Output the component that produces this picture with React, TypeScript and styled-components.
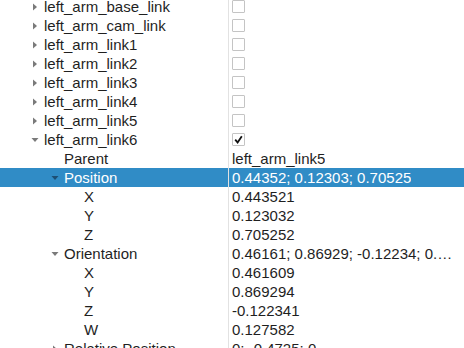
import React from "react";
import styled, { createGlobalStyle } from "styled-components";

const GlobalStyle = createGlobalStyle`
  html, body {
    margin: 0;
    padding: 0;
    background: #ffffff;
    overflow: hidden;
  }
  body {
    font-family: "Liberation Sans", "DejaVu Sans", sans-serif;
    font-size: 15px;
    color: #1f1f1f;
  }
`;

const Tree = styled.div`
  width: 464px;
  height: 348px;
  overflow: hidden;
  display: flex;
  flex-direction: column;
`;

const Rows = styled.div`
  margin-top: -3px;
  display: flex;
  flex-direction: column;
`;

const Row = styled.div<{ selected?: boolean }>`
  height: 19px;
  flex: none;
  display: flex;
  align-items: center;
  background: ${({ selected }) => (selected ? "#308cc6" : "transparent")};
  color: ${({ selected }) => (selected ? "#ffffff" : "#1f1f1f")};
`;

const NameCell = styled.div<{ depth: number }>`
  width: 229px;
  height: 100%;
  box-sizing: border-box;
  flex: none;
  display: flex;
  align-items: center;
  padding-left: ${({ depth }) => 26 + depth * 20}px;
  border-right: 1px solid #e2e2e2;
  white-space: nowrap;
`;

const Expander = styled.span`
  width: 18px;
  height: 19px;
  flex: none;
  display: flex;
  align-items: center;
  justify-content: center;
`;

const NameText = styled.span`
  line-height: 19px;
`;

const ValueCell = styled.div`
  flex: 1;
  min-width: 0;
  height: 100%;
  display: flex;
  align-items: center;
  padding-left: 3px;
  padding-right: 6px;
  white-space: nowrap;
  overflow: hidden;
`;

const ValueText = styled.span`
  overflow: hidden;
  text-overflow: ellipsis;
  line-height: 19px;
`;

const CheckBox = styled.span`
  width: 13px;
  height: 13px;
  box-sizing: border-box;
  border: 1px solid #c4c4c4;
  border-radius: 1px;
  background: #ffffff;
  display: flex;
  align-items: center;
  justify-content: center;
`;

type Arrow = "none" | "right" | "down";

type Item = {
  name: string;
  depth: number;
  arrow: Arrow;
  value?: string;
  check?: boolean;
  selected?: boolean;
};

const items: Item[] = [
  { name: "left_arm_base_link", depth: 0, arrow: "right", check: false },
  { name: "left_arm_cam_link", depth: 0, arrow: "right", check: false },
  { name: "left_arm_link1", depth: 0, arrow: "right", check: false },
  { name: "left_arm_link2", depth: 0, arrow: "right", check: false },
  { name: "left_arm_link3", depth: 0, arrow: "right", check: false },
  { name: "left_arm_link4", depth: 0, arrow: "right", check: false },
  { name: "left_arm_link5", depth: 0, arrow: "right", check: false },
  { name: "left_arm_link6", depth: 0, arrow: "down", check: true },
  { name: "Parent", depth: 1, arrow: "none", value: "left_arm_link5" },
  { name: "Position", depth: 1, arrow: "down", value: "0.44352; 0.12303; 0.70525", selected: true },
  { name: "X", depth: 2, arrow: "none", value: "0.443521" },
  { name: "Y", depth: 2, arrow: "none", value: "0.123032" },
  { name: "Z", depth: 2, arrow: "none", value: "0.705252" },
  { name: "Orientation", depth: 1, arrow: "down", value: "0.46161; 0.86929; -0.12234; 0.127582" },
  { name: "X", depth: 2, arrow: "none", value: "0.461609" },
  { name: "Y", depth: 2, arrow: "none", value: "0.869294" },
  { name: "Z", depth: 2, arrow: "none", value: "-0.122341" },
  { name: "W", depth: 2, arrow: "none", value: "0.127582" },
  { name: "Relative Position", depth: 1, arrow: "right", value: "0; -0.4725; 0" },
];

const ArrowIcon = ({ dir, light }: { dir: Arrow; light?: boolean }) => {
  if (dir === "none") return null;
  const fill = light ? "#1d4f74" : "#7a7a7a";
  return dir === "right" ? (
    <svg width="8" height="8" viewBox="0 0 8 8">
      <polygon points="2,0.5 6,4 2,7.5" fill={fill} />
    </svg>
  ) : (
    <svg width="8" height="8" viewBox="0 0 8 8">
      <polygon points="0.5,2 7.5,2 4,6" fill={fill} />
    </svg>
  );
};

const Check = () => (
  <svg width="9" height="9" viewBox="0 0 9 9">
    <path d="M1.2 4.6 L3.6 7.4 L7.8 1.2" stroke="#111" strokeWidth="1.8" fill="none" />
  </svg>
);

const App = (): JSX.Element => {
  return (
    <>
      <GlobalStyle />
      <Tree>
        <Rows>
          {items.map((it, i) => (
            <Row key={i} selected={it.selected}>
              <NameCell depth={it.depth}>
                <Expander>
                  <ArrowIcon dir={it.arrow} light={it.selected} />
                </Expander>
                <NameText>{it.name}</NameText>
              </NameCell>
              <ValueCell>
                {it.check !== undefined ? (
                  <CheckBox>{it.check && <Check />}</CheckBox>
                ) : (
                  <ValueText>{it.value}</ValueText>
                )}
              </ValueCell>
            </Row>
          ))}
        </Rows>
      </Tree>
    </>
  );
};

export default App;
